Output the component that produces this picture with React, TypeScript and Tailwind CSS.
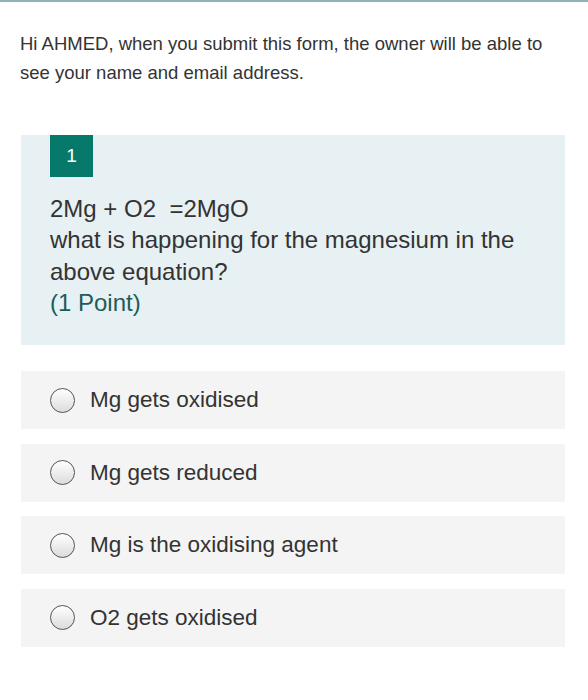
const OPTIONS = ['Mg gets oxidised', 'Mg gets reduced', 'Mg is the oxidising agent', 'O2 gets oxidised']

function Radio() {
  return (
    <span className="flex-none w-[25px] h-[25px] rounded-full border-[1.5px] border-[#555] bg-gradient-to-b from-white to-[#dcdcdc]" />
  )
}

export default function App() {
  return (
    <div className="min-h-[700px] bg-white text-[#333] font-['Liberation_Sans',Arial,sans-serif]">
      <div className="h-[2px] bg-[#8db5b2]" />

      {/* intro */}
      <p className="px-[20px] pt-[27px] pr-[30px] text-[18.5px] leading-[29px] text-[#333]">
        Hi AHMED, when you submit this form, the owner will be able to see your name and email address.
      </p>

      {/* question */}
      <div className="mx-[21px] mt-[48px] w-[544px] bg-[#e7f0f3] pl-[29px] pr-4 pb-[27px]">
        <div className="w-[43px] h-[42px] bg-[#07796a] text-white text-[19px] flex items-center justify-center">1</div>
        <div className="mt-[16px] text-[24px] leading-[31.3px] text-[#333]">
          <p>2Mg + O2&nbsp; =2MgO</p>
          <p>what is happening for the magnesium in the above equation?</p>
          <p className="text-[#1c5d59]">(1 Point)</p>
        </div>
      </div>

      {/* options */}
      <div className="mx-[21px] mt-[26px] w-[544px] flex flex-col gap-[14.5px]">
        {OPTIONS.map(o => (
          <div key={o} className="h-[58px] bg-[#f4f4f4] flex items-center gap-[15px] pl-[29px]">
            <Radio />
            <span className="text-[22.5px] text-[#333]">{o}</span>
          </div>
        ))}
      </div>
    </div>
  )
}
